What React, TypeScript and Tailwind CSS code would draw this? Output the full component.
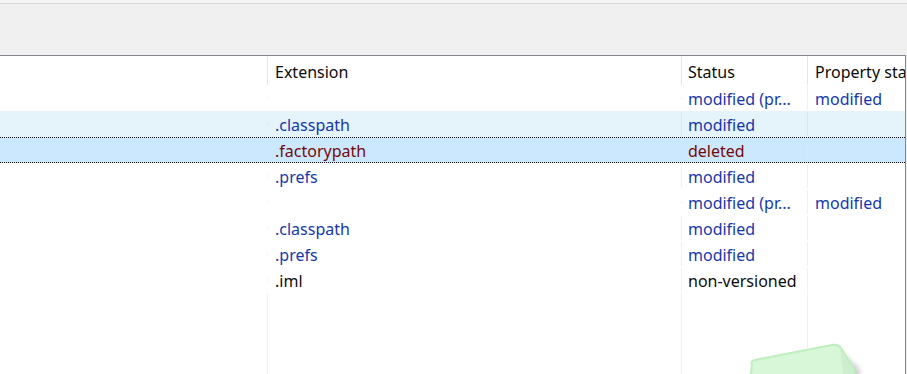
import type { ReactNode } from "react";

type Tone = "mod" | "del" | "plain";

interface FileRow {
  ext: string;
  status: string;
  prop: string;
  tone: Tone;
  state?: "hover" | "selected";
}

const rows: FileRow[] = [
  { ext: "", status: "modified (pr...", prop: "modified", tone: "mod" },
  { ext: ".classpath", status: "modified", prop: "", tone: "mod", state: "hover" },
  { ext: ".factorypath", status: "deleted", prop: "", tone: "del", state: "selected" },
  { ext: ".prefs", status: "modified", prop: "", tone: "mod" },
  { ext: "", status: "modified (pr...", prop: "modified", tone: "mod" },
  { ext: ".classpath", status: "modified", prop: "", tone: "mod" },
  { ext: ".prefs", status: "modified", prop: "", tone: "mod" },
  { ext: ".iml", status: "non-versioned", prop: "", tone: "plain" },
];

const toneClass: Record<Tone, string> = {
  mod: "text-[#1638ad]",
  del: "text-[#740808]",
  plain: "text-[#0c0c0c]",
};

function Cell({ w, pl, children, line, last }: { w: string; pl: string; children?: ReactNode; line: string; last?: boolean }) {
  return (
    <div className={`${w} ${pl} shrink-0 overflow-hidden whitespace-nowrap leading-[22px] pt-[2px] ${last ? "" : `border-r ${line}`}`}>
      {children}
    </div>
  );
}

function Row({ row }: { row: FileRow }) {
  const bg =
    row.state === "hover"
      ? "bg-[#e5f3fb]"
      : row.state === "selected"
      ? "bg-[#cce8ff] border-y border-dotted border-[#111111]"
      : "";
  const line = row.state ? "border-[#d6e8f6]" : "border-[#edf0f5]";
  return (
    <div className={`flex h-[26px] items-center ${bg} ${toneClass[row.tone]}`}>
      <Cell w="w-[268px]" pl="pl-[7px]" line={line} />
      <Cell w="w-[414px]" pl="pl-[7px]" line={line}>{row.ext}</Cell>
      <Cell w="w-[126px]" pl="pl-[6px]" line={line}>{row.status}</Cell>
      <Cell w="flex-1 min-w-0" pl="pl-[7px]" line={line} last>{row.prop}</Cell>
    </div>
  );
}

function GreenWedge() {
  return (
    <svg className="absolute left-[740px] top-[337px]" width="130" height="45" viewBox="0 0 130 45">
      <defs>
        <filter id="sh" x="-20%" y="-40%" width="140%" height="180%">
          <feGaussianBlur stdDeviation="2.5" />
        </filter>
      </defs>
      <path d="M14 30 L96 10 L120 32 L120 45 L10 45 Z" fill="#9a9a9a" opacity="0.45" filter="url(#sh)" />
      <path
        d="M12 28 Q10 24 15 23 L92 8 Q98 7 101 11 L114 32 L114 45 L10 45 Z"
        fill="#d8f7d8"
        stroke="#bfeebf"
        strokeWidth="2"
      />
      <path d="M100 12 L113 32 L113 45 L104 45 Z" fill="#cdeecd" />
    </svg>
  );
}

export default function App() {
  return (
    <div
      className="relative w-[907px] h-[374px] overflow-hidden bg-[#f0f0f0] text-[16px] leading-none"
      style={{ fontFamily: '"Noto Sans", "Segoe UI", sans-serif' }}
    >
      <div className="h-[3px] bg-[#f6f6f6] border-b border-[#d9d9d9] box-content" />
      <div className="h-[51px]" />
      <div className="flex h-[320px] w-[906px] flex-col border-t border-r border-[#828790] bg-white">
        {/* Header */}
        <div className="flex h-[29px] text-[#0c0c0c] leading-[22px]">
          <div className="w-[268px] shrink-0 border-r border-[#e5e5e5]" />
          <div className="w-[414px] shrink-0 flex items-center border-r border-[#e5e5e5] pl-[7px] pt-[2px]">Extension</div>
          <div className="w-[126px] shrink-0 flex items-center border-r border-[#e5e5e5] pl-[6px] pt-[2px]">Status</div>
          <div className="flex-1 min-w-0 flex items-center overflow-hidden whitespace-nowrap pl-[7px] pt-[2px]">Property status</div>
        </div>

        {rows.map((r, i) => (
          <Row key={i} row={r} />
        ))}

        {/* Empty space, column lines continue */}
        <div className="flex flex-1">
          <div className="w-[268px] shrink-0 border-r border-[#edf0f5]" />
          <div className="w-[414px] shrink-0 border-r border-[#edf0f5]" />
          <div className="w-[126px] shrink-0 border-r border-[#edf0f5]" />
          <div className="flex-1" />
        </div>
      </div>
      <GreenWedge />
    </div>
  );
}
